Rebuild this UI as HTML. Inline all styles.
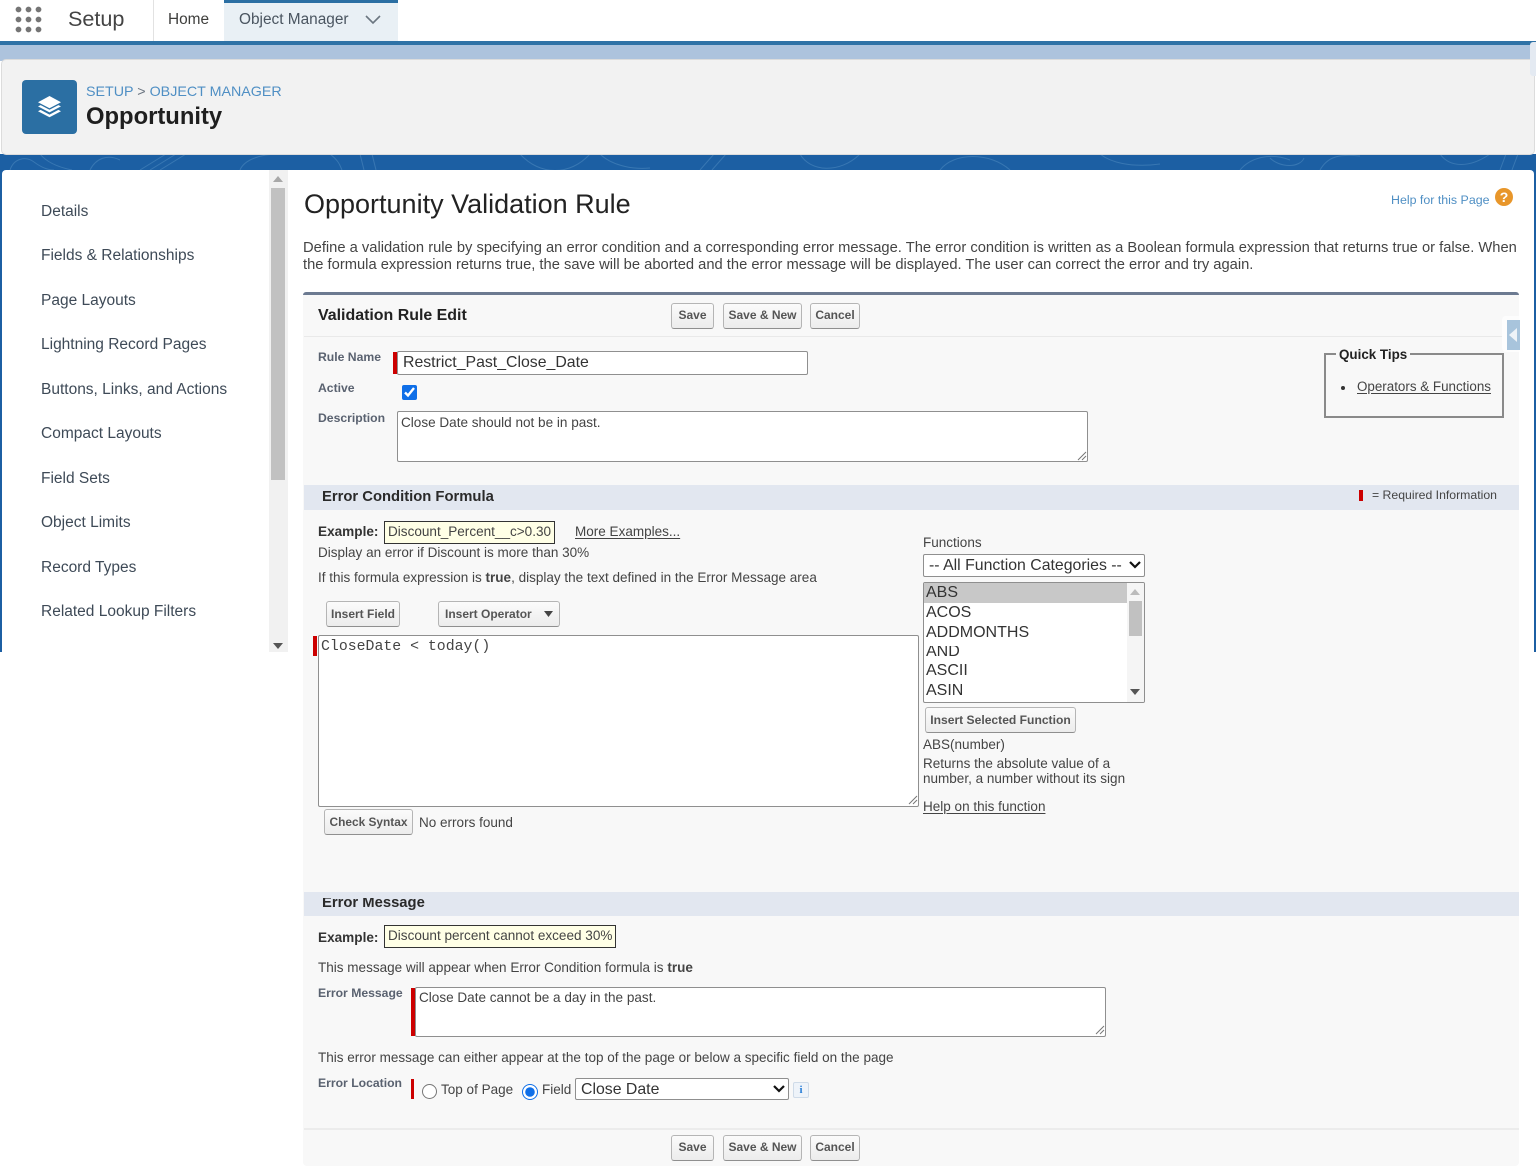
<!DOCTYPE html>
<html><head><meta charset="utf-8"><title>Opportunity Validation Rule</title>
<style>
html,body{margin:0;padding:0;background:#fff}
#p{position:relative;width:1536px;height:1170px;overflow:hidden;background:#fff;font-family:"Liberation Sans",sans-serif;color:#3e3e3c;filter:blur(.35px)}
#p div,#p span.a,#p a.a,#p input,#p select{position:absolute}
.t{position:absolute;white-space:nowrap;line-height:18px;font-size:13.52px;color:#333}
.lab{position:absolute;white-space:nowrap;line-height:16px;font-size:12.2px;font-weight:bold;color:#5a6270}
.b{position:absolute;box-sizing:border-box;height:26px;line-height:22px;padding-top:1px;text-align:center;border:1px solid #b5b5b5;border-bottom-color:#8f8f8f;border-radius:3px;background:linear-gradient(#fbfbfb,#ececec);font-size:12px;font-weight:bold;color:#555;white-space:nowrap}
.box{position:absolute;box-sizing:border-box;background:#fff;border:1px solid #8f8f8f;border-radius:2px}
.req{position:absolute;background:#c00;width:3px}
.nav{position:absolute;left:41px;font-size:15.5px;line-height:20px;color:#3e4a57;white-space:nowrap}
.sec{position:absolute;left:304px;width:1215px;background:#e2e7f0}
.ex{position:absolute;box-sizing:border-box;background:#ffffe6;border:1.5px solid #333;height:23px;line-height:20px;font-size:13.55px;color:#444;padding-left:3px;white-space:nowrap}
.o{position:absolute;left:2px;font-size:16px;line-height:20px;color:#333;white-space:nowrap}
u{text-underline-offset:2px}
</style></head><body><div id="p">

<!-- top bar -->
<div style="left:0;top:0;width:1536px;height:41px;background:#fff"></div>
<svg style="position:absolute;left:15px;top:6px" width="28" height="28" fill="#757575"><circle cx="3.5" cy="3.5" r="2.9"/><circle cx="13.500" cy="3.500" r="2.9"/><circle cx="23.500" cy="3.500" r="2.9"/><circle cx="3.500" cy="13.500" r="2.9"/><circle cx="13.500" cy="13.500" r="2.9"/><circle cx="23.500" cy="13.500" r="2.9"/><circle cx="3.500" cy="23.500" r="2.9"/><circle cx="13.500" cy="23.500" r="2.9"/><circle cx="23.500" cy="23.500" r="2.9"/></svg>
<span class="t" style="left:68px;top:5px;font-size:21.6px;line-height:28px;color:#444">Setup</span>
<div style="left:153px;top:0;width:1px;height:41px;background:#e2e2e2"></div>
<span class="t" style="left:168px;top:10px;font-size:15.4px;line-height:20px;color:#3e3e3c">Home</span>
<div style="left:224px;top:0;width:174px;height:41px;background:#e9f0f5"></div>
<div style="left:224px;top:0;width:174px;height:3px;background:#2b6fa3"></div>
<span class="t" style="left:239px;top:10px;font-size:15.4px;line-height:20px;color:#4a5560">Object Manager</span>
<svg style="position:absolute;left:365px;top:14px" width="16" height="11" fill="none" stroke="#6b7680" stroke-width="1.6"><path d="M1 2l7 7 7-7"/></svg>

<!-- header band -->
<div style="left:0;top:41px;width:1536px;height:4px;background:#2f72a6"></div>
<div style="left:0;top:45px;width:1536px;height:16px;background:#adc3dd"></div>
<div style="left:0;top:154px;width:1536px;height:16px;background:#1c5fa3"></div>
<svg style="position:absolute;left:0;top:154px" width="1536" height="16" fill="none" stroke="#4f8bc0" stroke-width="1" opacity=".55"><path d="M10 16C14 4 26 2 34 8s14 8 20 8M40 0c8 10 22 14 32 16M90 16c6-12 18-16 30-10M140 16l26-16M150 16l26-16M160 16l26-16M240 16c4-10 20-16 40-16M330 0c10 8 10 12 12 16M360 0l4 16M372 0l4 16M520 0c20 22 50 22 70 0M600 0c10 10 30 16 50 14M700 16l14-16M712 16l14-16M800 0c10 18 40 20 60 0M940 16c14-18 50-18 70 0M1100 0c10 8 30 14 60 10M1240 16c10-12 30-18 50-10M1270 4c10 10 30 10 34 0M1320 16c8-14 20-16 40-14M1440 0c10 14 30 14 50 0M1500 16l6-16M1512 16l6-16"/></svg>
<div style="left:2px;top:60px;width:1532px;height:94px;background:#f2f2f2;border-radius:4px;box-shadow:0 0 0 1px #dcdcdc"></div>
<div style="left:1530px;top:42px;width:6px;height:34px;background:#e4eaf2;border-radius:3px 0 0 3px"></div>
<div style="left:22px;top:80px;width:55px;height:54px;background:#2b6fa3;border-radius:4px"></div>
<svg style="position:absolute;left:37px;top:95px" width="25" height="24" fill="#fff"><path d="M12.500 1L24 7.200 12.500 13.200 1 7.200z"/><path d="M1 11.400l2.600-1.300 8.900 4.700 8.900-4.700 2.600 1.300-11.500 6z"/><path d="M1 16.200l2.600-1.300 8.900 4.700 8.900-4.700 2.600 1.300-11.500 6z"/></svg>
<span class="t" style="left:86px;top:82px;font-size:14.27px;line-height:20px;color:#4f8fc4">SETUP <span style="color:#6a7480">&gt;</span> OBJECT MANAGER</span>
<span class="t" style="left:86px;top:101px;font-size:23.8px;line-height:32px;font-weight:bold;color:#1f1f1f">Opportunity</span>

<!-- main white panels -->
<div style="left:0;top:170px;width:1536px;height:482px;background:#1c5fa3"></div>
<div style="left:2px;top:170px;width:1532px;height:482px;background:#fff;border-radius:4px 4px 0 0"></div>
<div style="left:0;top:652px;width:1536px;height:518px;background:#fff"></div>

<!-- sidebar -->
<span class="nav" style="top:202px">Details</span>
<span class="nav" style="top:246px">Fields &amp; Relationships</span>
<span class="nav" style="top:291px">Page Layouts</span>
<span class="nav" style="top:335px">Lightning Record Pages</span>
<span class="nav" style="top:380px">Buttons, Links, and Actions</span>
<span class="nav" style="top:424px">Compact Layouts</span>
<span class="nav" style="top:469px">Field Sets</span>
<span class="nav" style="top:513px">Object Limits</span>
<span class="nav" style="top:558px">Record Types</span>
<span class="nav" style="top:602px">Related Lookup Filters</span>
<div style="left:269px;top:170px;width:19px;height:482px;background:#f1f1f1"></div>
<div style="left:271px;top:188px;width:14px;height:292px;background:#c1c1c1"></div>
<svg style="position:absolute;left:273px;top:176px" width="10" height="6" fill="#a8a8a8"><path d="M5 0l5 6H0z"/></svg>
<svg style="position:absolute;left:273px;top:643px" width="10" height="6" fill="#555"><path d="M0 0h10L5 6z"/></svg>

<!-- title -->
<span class="t" style="left:304px;top:186px;font-size:27px;line-height:36px;color:#222">Opportunity Validation Rule</span>
<span class="t" style="left:1391px;top:191px;font-size:12.4px;color:#4f8fc4">Help for this Page</span>
<div style="left:1495px;top:188px;width:18px;height:18px;border-radius:50%;background:#e8962a;color:#fff;font-size:14px;line-height:18px;font-weight:bold;text-align:center">?</div>
<span class="t" style="left:303px;top:240px;font-size:14.72px;line-height:17px;color:#444">Define a validation rule by specifying an error condition and a corresponding error message. The error condition is written as a Boolean formula expression that returns true or false. When<br>the formula expression returns true, the save will be aborted and the error message will be displayed. The user can correct the error and try again.</span>

<!-- form block -->
<div style="left:303px;top:292px;width:1216px;height:874px;background:#f8f8f8;border-radius:4px"></div>
<div style="left:303px;top:292px;width:1216px;height:3px;background:#6c7a91;border-radius:3px 3px 0 0"></div>
<div style="left:304px;top:336px;width:1215px;height:1px;background:#e9e9e9"></div>
<span class="t" style="left:318px;top:306px;font-size:15.95px;line-height:20px;font-weight:bold;color:#222">Validation Rule Edit</span>
<span class="b" style="left:671px;top:303px;width:43px;padding-top:0">Save</span>
<span class="b" style="left:723px;top:303px;width:79px;padding-top:0">Save &amp; New</span>
<span class="b" style="left:810px;top:303px;width:50px;padding-top:0">Cancel</span>

<span class="lab" style="left:318px;top:349px">Rule Name</span>
<div class="req" style="left:393px;top:352px;height:22px;width:4px"></div>
<div class="box" style="left:397px;top:351px;width:411px;height:24px;font-size:15.85px;line-height:22px;padding-left:5px;color:#333">Restrict_Past_Close_Date</div>
<span class="lab" style="left:318px;top:380px">Active</span>
<input type="checkbox" checked style="left:402px;top:385px;width:15px;height:15px;margin:0;accent-color:#0f6fe8">
<span class="lab" style="left:318px;top:410px">Description</span>
<div class="box" style="left:397px;top:411px;width:691px;height:51px;font-size:13.55px;line-height:18px;padding:2px 3px;color:#444">Close Date should not be in past.</div>
<svg style="position:absolute;left:1077px;top:451px" width="10" height="10" stroke="#777" fill="none"><path d="M9 1L1 9M9 5L5 9"/></svg>

<!-- quick tips -->
<div style="left:1324px;top:353px;width:180px;height:65px;box-sizing:border-box;border:2px solid #8a8a8a"></div>
<span class="t" style="left:1336px;top:346px;padding:0 3px;background:#f8f8f8;font-size:13.4px;font-weight:bold;color:#222">Quick Tips</span>
<div style="left:1341px;top:386px;width:4px;height:4px;border-radius:50%;background:#333"></div>
<span class="t" style="left:1357px;top:378px;font-size:13.4px;color:#444"><u>Operators &amp; Functions</u></span>
<div style="left:1502px;top:316px;width:17px;height:36px;background:#fdfdfd;border-radius:4px 0 0 4px"></div>
<div style="left:1507px;top:320px;width:13px;height:30px;background:#a8c4dc"></div>
<svg style="position:absolute;left:1509px;top:328px" width="8" height="14" fill="#eef3f8"><path d="M8 0v14L0 7z"/></svg>

<!-- error condition -->
<div class="sec" style="top:485px;height:25px"></div>
<span class="t" style="left:322px;top:487px;font-size:14.8px;line-height:20px;font-weight:bold;color:#2a2a2a">Error Condition Formula</span>
<div style="left:1359px;top:490px;width:4px;height:11px;background:#c00"></div>
<span class="t" style="left:1372px;top:486px;font-size:12.25px;color:#444">= Required Information</span>

<span class="t" style="left:318px;top:523px;font-size:13.6px;font-weight:bold;color:#333">Example:</span>
<div class="ex" style="left:384px;top:521px;width:171px">Discount_Percent__c&gt;0.30</div>
<span class="t" style="left:575px;top:523px;color:#444"><u>More Examples...</u></span>
<span class="t" style="left:318px;top:544px;color:#444">Display an error if Discount is more than 30%</span>
<span class="t" style="left:318px;top:569px;color:#444">If this formula expression is <b>true</b>, display the text defined in the Error Message area</span>

<span class="b" style="left:326px;top:601px;width:74px">Insert Field</span>
<span class="b" style="left:438px;top:601px;width:122px;text-align:left;padding-left:6px">Insert Operator</span>
<svg style="position:absolute;left:544px;top:611px" width="9" height="6" fill="#444"><path d="M0 0h9L4.500 6z"/></svg>

<div class="req" style="left:313px;top:636px;height:20px;width:4px"></div>
<div class="box" style="left:318px;top:635px;width:601px;height:172px;font-family:'Liberation Mono',monospace;font-size:14.85px;line-height:18px;padding:2px 2px;color:#444">CloseDate &lt; today()</div>
<svg style="position:absolute;left:908px;top:795px" width="10" height="10" stroke="#777" fill="none"><path d="M9 1L1 9M9 5L5 9"/></svg>
<span class="b" style="left:324px;top:809px;width:89px;font-size:11.9px">Check Syntax</span>
<span class="t" style="left:419px;top:814px;color:#444">No errors found</span>

<!-- functions -->
<span class="t" style="left:923px;top:534px;color:#444">Functions</span>
<div class="box" style="left:923px;top:554px;width:222px;height:23px;font-size:15.85px;line-height:22px;padding-left:5px;color:#333">-- All Function Categories --</div>
<svg style="position:absolute;left:1129px;top:561px" width="12" height="8" fill="none" stroke="#111" stroke-width="2.2"><path d="M1 1l5 5 5-5"/></svg>
<div class="box" style="left:923px;top:582px;width:222px;height:121px;overflow:hidden">
  <div style="left:0;top:0;width:203px;height:20px;background:#c8c8c8"></div>
  <span class="o" style="top:0">ABS</span>
  <span class="o" style="top:20px">ACOS</span>
  <span class="o" style="top:40px">ADDMONTHS</span>
  <span class="o" style="top:59px">AND</span>
  <div style="left:0;top:58px;width:203px;height:5px;background:#fff"></div>
  <span class="o" style="top:78px">ASCII</span>
  <span class="o" style="top:98px">ASIN</span>
  <div style="left:203px;top:0;width:17px;height:119px;background:#f5f5f5"></div>
  <div style="left:205px;top:18px;width:13px;height:35px;background:#c1c1c1"></div>
</div>
<svg style="position:absolute;left:1130px;top:589px" width="10" height="6" fill="#bbb"><path d="M5 0l5 6H0z"/></svg>
<svg style="position:absolute;left:1130px;top:689px" width="10" height="6" fill="#555"><path d="M0 0h10L5 6z"/></svg>
<span class="b" style="left:925px;top:707px;width:151px;font-size:12.1px">Insert Selected Function</span>
<span class="t" style="left:923px;top:736px;color:#444">ABS(number)</span>
<span class="t" style="left:923px;top:756px;line-height:15px;color:#444">Returns the absolute value of a<br>number, a number without its sign</span>
<span class="t" style="left:923px;top:798px;color:#444"><u>Help on this function</u></span>

<!-- error message -->
<div class="sec" style="top:892px;height:24px"></div>
<span class="t" style="left:322px;top:893px;font-size:14.8px;line-height:20px;font-weight:bold;color:#2a2a2a">Error Message</span>
<div style="left:304px;top:892px;width:300px;height:5.5px;background:#e2e7f0"></div>
<span class="t" style="left:318px;top:929px;font-size:13.6px;font-weight:bold;color:#333">Example:</span>
<div class="ex" style="left:384px;top:925px;width:232px">Discount percent cannot exceed 30%</div>
<span class="t" style="left:318px;top:959px;color:#444">This message will appear when Error Condition formula is <b>true</b></span>
<span class="lab" style="left:318px;top:985px">Error Message</span>
<div class="req" style="left:411px;top:988px;height:48px;width:4px"></div>
<div class="box" style="left:415px;top:987px;width:691px;height:50px;font-size:13.55px;line-height:18px;padding:1px 3px;color:#444">Close Date cannot be a day in the past.</div>
<svg style="position:absolute;left:1095px;top:1025px" width="10" height="10" stroke="#777" fill="none"><path d="M9 1L1 9M9 5L5 9"/></svg>
<span class="t" style="left:318px;top:1049px;color:#444">This error message can either appear at the top of the page or below a specific field on the page</span>
<span class="lab" style="left:318px;top:1075px">Error Location</span>
<div class="req" style="left:411px;top:1079px;height:20px;width:3px"></div>
<input type="radio" style="left:422px;top:1084px;width:15px;height:15px;margin:0">
<span class="t" style="left:441px;top:1081px;color:#444">Top of Page</span>
<input type="radio" checked style="left:522px;top:1084px;width:16px;height:16px;margin:0;accent-color:#0f6fe8">
<span class="t" style="left:542px;top:1081px;color:#444">Field</span>
<div class="box" style="left:575px;top:1078px;width:214px;height:22px;font-size:15.85px;line-height:21px;padding-left:5px;color:#333">Close Date</div>
<svg style="position:absolute;left:773px;top:1085px" width="12" height="8" fill="none" stroke="#111" stroke-width="2.2"><path d="M1 1l5 5 5-5"/></svg>
<div style="left:793px;top:1082px;width:16px;height:16px;box-sizing:border-box;border:1px solid #cfdbe8;border-radius:2px;background:#eef3f9;color:#2a7fd8;font:bold 11px/14px 'Liberation Serif',serif;text-align:center">i</div>

<div style="left:304px;top:1128px;width:1215px;height:2px;background:#ececec"></div>
<span class="b" style="left:671px;top:1135px;width:43px;padding-top:0">Save</span>
<span class="b" style="left:723px;top:1135px;width:79px;padding-top:0">Save &amp; New</span>
<span class="b" style="left:810px;top:1135px;width:50px;padding-top:0">Cancel</span>
</div></body></html>
